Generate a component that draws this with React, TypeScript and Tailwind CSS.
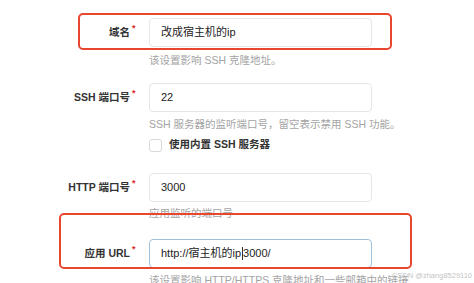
import React from "react";

const font = { fontFamily: '"Liberation Sans", "Noto Sans CJK SC", sans-serif' };

function Label({ text }: { text: string }) {
  return (
    <div className="w-[132px] shrink-0 flex justify-end items-center h-[29px] text-[10.5px] font-bold text-[#333]">
      <span>{text}</span>
      <span className="text-[#db2828] text-[9px] ml-[2px] -mt-[8px] w-[5px]">*</span>
    </div>
  );
}

function Input({ children, focus }: { children: React.ReactNode; focus?: boolean }) {
  return (
    <div
      className={`w-[223px] h-[29px] rounded-[4px] border bg-white flex items-center pl-[11px] text-[11px] text-[#222] ${
        focus ? "border-[#9ec1dd]" : "border-[#e6e6e6]"
      }`}
    >
      {children}
    </div>
  );
}

function Help({ children }: { children: React.ReactNode }) {
  return <div className="ml-[149px] h-[18px] leading-[18px] text-[10.5px] text-[#a3a3a3] whitespace-nowrap">{children}</div>;
}

export default function App() {
  return (
    <div className="relative w-[474px] h-[283px] overflow-hidden bg-white" style={font}>
      <div className="flex flex-col pt-[18px]">
        <div className="flex items-center gap-[12px] ml-[5px]">
          <Label text="域名" />
          <Input>改成宿主机的ip</Input>
        </div>
        <div className="mt-[4px]">
          <Help>该设置影响 SSH 克隆地址。</Help>
        </div>

        <div className="flex items-center gap-[12px] ml-[5px] mt-[14px]">
          <Label text="SSH 端口号" />
          <Input>22</Input>
        </div>
        <div className="mt-[3px]">
          <Help>SSH 服务器的监听端口号，留空表示禁用 SSH 功能。</Help>
        </div>
        <div className="ml-[149px] mt-[3px] h-[18px] flex items-center gap-[7px]">
          <div className="w-[13px] h-[13px] rounded-[3px] border border-[#d8d8d8] bg-white" />
          <span className="text-[10.5px] font-bold text-[#333]">使用内置 SSH 服务器</span>
        </div>

        <div className="flex items-center gap-[12px] ml-[5px] mt-[19px]">
          <Label text="HTTP 端口号" />
          <Input>3000</Input>
        </div>
        <div className="mt-[2px]">
          <Help>应用监听的端口号</Help>
        </div>

        <div className="flex items-center gap-[12px] ml-[5px] mt-[17px]">
          <Label text="应用 URL" />
          <Input focus>
            <span>http://宿主机的ip</span>
            <span className="inline-block w-px h-[13px] bg-[#333] mx-[0.5px]" />
            <span>3000/</span>
          </Input>
        </div>
        <div className="mt-[3px]">
          <Help>该设置影响 HTTP/HTTPS 克隆地址和一些邮箱中的链接</Help>
        </div>
      </div>

      <div className="absolute left-[78px] top-[13px] w-[314px] h-[37px] border-2 border-[#e8462f] rounded-[5px] pointer-events-none" />
      <div className="absolute left-[59px] top-[213px] w-[353px] h-[56px] border-2 border-[#e8462f] rounded-[5px] pointer-events-none" />
      <div className="absolute left-[392px] top-[271px] text-[7.5px] leading-[9px] text-[#c4c4c4] whitespace-nowrap">CSDN @zhang8529110</div>
    </div>
  );
}
